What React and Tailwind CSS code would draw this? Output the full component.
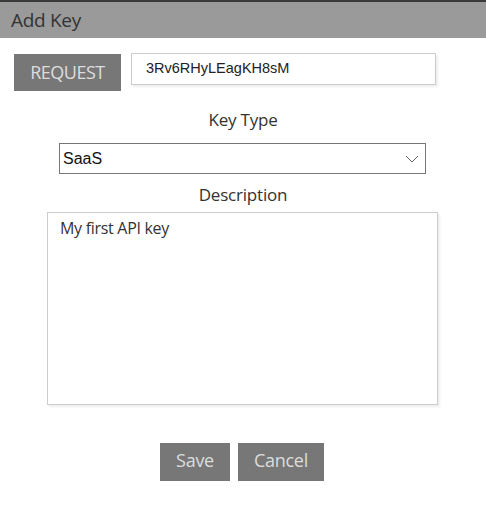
import React from "react";

const FONT = { fontFamily: '"Open Sans", "Noto Sans", sans-serif' };
const ARIAL = { fontFamily: '"Liberation Sans", Arial, sans-serif' };

export default function App() {
  return (
    <div className="h-[510px] w-[486px] bg-white text-[#333]" style={FONT}>
      {/* Title bar */}
      <div className="h-[38px] border-t-2 border-[#3a3a3a] bg-[#9a9a9a] pl-[11px] pt-[5px]">
        <span className="text-[19px] leading-[26px] tracking-[-0.3px] text-[#333]">Add Key</span>
      </div>

      {/* Request row */}
      <div className="flex items-start pl-[14px] pt-[16px]">
        <button className="h-[37px] w-[107px] bg-[#777] pb-[1px] text-[18px] tracking-[-0.5px] text-[#ddd]">
          REQUEST
        </button>
        <div className="-mt-px ml-[10px] flex h-[32px] w-[305px] items-center border border-[#ccc] pl-[14px] shadow-[2px_2px_2px_#eee]">
          <span className="text-[14.5px] text-[#222]" style={ARIAL}>
            3Rv6RHyLEagKH8sM
          </span>
        </div>
      </div>

      {/* Key type */}
      <div className="mt-[16px] text-center text-[17px] leading-[26px] tracking-[-0.2px]">Key Type</div>
      <div className="mt-[10px] pl-[59px]">
        <div className="flex h-[31px] w-[367px] items-center justify-between border border-[#777] pl-[3px] pr-[6px]">
          <span className="text-[16px] text-[#111]" style={ARIAL}>
            SaaS
          </span>
          <svg width="14" height="8" viewBox="0 0 14 8" fill="none" stroke="#666" strokeWidth="1">
            <path d="M1 1l6 6 6-6" />
          </svg>
        </div>
      </div>

      {/* Description */}
      <div className="mt-[8px] text-center text-[17px] leading-[26px] tracking-[-0.2px]">Description</div>
      <div className="mt-[4px] pl-[47px]">
        <div className="h-[193px] w-[391px] border border-[#ccc] pl-[12px] pt-[3px] shadow-[2px_2px_2px_#eee]">
          <span className="text-[16px] leading-[24px] tracking-[-0.3px] text-[#333]">My first API key</span>
        </div>
      </div>

      {/* Actions */}
      <div className="mt-[38px] flex justify-center gap-[8px] pr-[2px]">
        <button className="h-[38px] w-[70px] bg-[#777] pb-[3px] text-[18px] tracking-[-0.3px] text-[#ddd]">Save</button>
        <button className="h-[38px] w-[86px] bg-[#777] pb-[3px] text-[18px] tracking-[-0.3px] text-[#ddd]">Cancel</button>
      </div>
    </div>
  );
}
